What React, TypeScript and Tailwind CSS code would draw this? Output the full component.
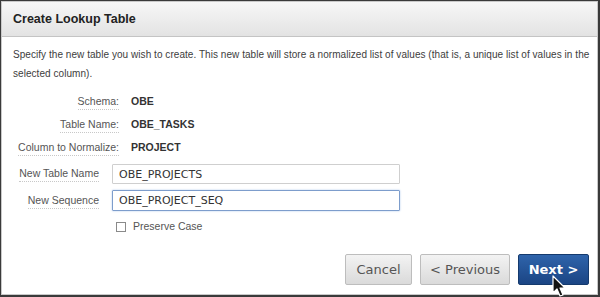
import React from 'react';

const sans = "font-['Liberation_Sans','Arial',sans-serif]";
const deja = "font-['DejaVu_Sans','Verdana',sans-serif]";

const infoRows = [
  { label: 'Schema:', value: 'OBE' },
  { label: 'Table Name:', value: 'OBE_TASKS' },
  { label: 'Column to Normalize:', value: 'PROJECT' },
];

const Cursor: React.FC = () => (
  <svg className="absolute left-[552px] top-[275px]" width="16" height="24" viewBox="0 0 16 24">
    <path d="M1 1 L1 18 L5 14 L8 21 L11 20 L8 13 L13 13 Z" fill="#111" stroke="#fff" strokeWidth="1.2" strokeLinejoin="round" />
  </svg>
);

export default function App() {
  return (
    <div className={`relative w-[600px] h-[297px] bg-[#3a3a3a] pt-px pl-px pr-[2px] pb-[2px] ${sans}`}>
      <div className="flex flex-col h-full bg-white border border-[#c9c9c9]">
        {/* En-tête */}
        <div className="flex items-center h-[35px] px-[11px] bg-gradient-to-b from-[#f7f7f7] to-[#e3e3e3] border-b border-[#c4c4c4]">
          <h1 className="text-[12.5px] font-bold text-[#222]">Create Lookup Table</h1>
        </div>

        <p className="mt-[8px] pl-[11px] pr-[2px] text-[10px] tracking-[0.05px] leading-[19px] text-[#3d3d3d]">
          Specify the new table you wish to create. This new table will store a normalized list of values (that is, a unique list of values in the selected column).
        </p>

        <div className="mt-[10px] flex flex-col gap-[5px]">
          {infoRows.map((row) => (
            <div key={row.label} className="flex items-center h-[18px]">
              <div className="w-[117px] flex justify-end">
                <span className="text-[10.5px] text-[#555] border-b border-dotted border-[#c8c8c8] leading-[15px]">{row.label}</span>
              </div>
              <span className="ml-[12px] text-[10.5px] font-bold text-[#333]">{row.value}</span>
            </div>
          ))}
        </div>

        <div className="mt-[7px] flex flex-col gap-[6px]">
          <div className="flex items-center">
            <div className="w-[97px] flex justify-end">
              <span className="text-[10.5px] text-[#555] border-b border-dotted border-[#c8c8c8] leading-[15px]">New Table Name</span>
            </div>
            <input
              readOnly
              value="OBE_PROJECTS"
              className={`ml-[13px] w-[288px] h-[20px] px-[6px] border border-[#cfcfcf] rounded-[1px] text-[11px] text-[#333] outline-none ${deja}`}
            />
          </div>
          <div className="flex items-center">
            <div className="w-[97px] flex justify-end">
              <span className="text-[10.5px] text-[#555] border-b border-dotted border-[#c8c8c8] leading-[15px]">New Sequence</span>
            </div>
            <input
              readOnly
              value="OBE_PROJECT_SEQ"
              className={`ml-[13px] w-[288px] h-[21px] px-[6px] border border-[#7d9dcc] rounded-[1px] shadow-[0_0_2px_#a9c4ea] text-[11px] text-[#333] outline-none ${deja}`}
            />
          </div>
          <label className="flex items-center ml-[114px] mt-[2px]">
            <span className="w-[10px] h-[10px] border border-[#8a8a8a] bg-white" />
            <span className="ml-[7px] text-[10.5px] text-[#555]">Preserve Case</span>
          </label>
        </div>

        <div className={`mt-auto mb-[9px] mr-[8px] flex justify-end gap-[8px] ${deja}`}>
          <button className="w-[67px] h-[31px] rounded-[2px] border border-[#bdbdbd] bg-gradient-to-b from-[#f3f3f3] to-[#dadada] text-[13px] text-[#555]">
            Cancel
          </button>
          <button className="w-[90px] h-[31px] rounded-[2px] border border-[#bdbdbd] bg-gradient-to-b from-[#f3f3f3] to-[#dadada] text-[13px] text-[#555]">
            &lt; Previous
          </button>
          <button className="w-[71px] h-[31px] rounded-[2px] border border-[#153a6d] bg-gradient-to-b from-[#2f64ab] to-[#1b4584] text-[13px] font-bold text-white">
            Next &gt;
          </button>
        </div>
      </div>
      <Cursor />
    </div>
  );
}
